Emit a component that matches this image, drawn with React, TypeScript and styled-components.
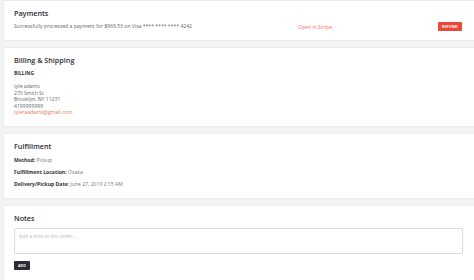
import React from 'react';
import styled, { createGlobalStyle } from 'styled-components';

const GlobalStyle = createGlobalStyle`
  html, body {
    margin: 0;
    padding: 0;
    background: #f3f3f3;
    font-family: "Open Sans", "Lato", sans-serif;
    color: #333;
  }
  * { box-sizing: border-box; }
`;

const Page = styled.div`
  display: flex;
  flex-direction: column;
  gap: 6px;
  padding-left: 3px;
  width: 474px;
  height: 280px;
  overflow: hidden;
`;

const Card = styled.section<{ $height: number }>`
  background: #fff;
  border: 1px solid #ececec;
  border-right: none;
  height: ${({ $height }) => $height}px;
  flex-shrink: 0;
  padding: 7px 12px 0 10px;
`;

const Title = styled.h2`
  margin: 0;
  font-size: 7.2px;
  font-weight: 600;
  color: #2e2e33;
  line-height: 10px;
`;

const PaymentRow = styled.div`
  display: grid;
  grid-template-columns: 284px 1fr auto;
  align-items: center;
  margin-top: 4px;
`;

const Small = styled.div`
  font-size: 5.1px;
  line-height: 6.5px;
  color: #666;
`;

const Link = styled.a`
  font-size: 5.1px;
  color: #e9765b;
  text-decoration: none;
`;

const RefundButton = styled.button`
  display: block;
  background: #e8483a;
  color: #fff;
  border: none;
  border-radius: 1px;
  font-family: inherit;
  font-size: 3.6px;
  font-weight: 700;
  letter-spacing: 0.2px;
  height: 9px;
  width: 24px;
  padding: 0;
`;

const SubHead = styled.div`
  margin-top: 5px;
  font-size: 5px;
  font-weight: 700;
  color: #333;
`;

const Address = styled.div`
  margin-top: 7px;
  display: flex;
  flex-direction: column;
`;

const Email = styled(Small)`
  color: #e9765b;
`;

const Field = styled.div`
  margin-top: 6px;
  font-size: 5.1px;
  line-height: 7px;
  color: #777;

  & + & {
    margin-top: 5px;
  }

  b {
    color: #333;
    font-weight: 700;
  }
`;

const NoteArea = styled.textarea`
  display: block;
  margin-top: 5px;
  width: 449px;
  height: 26px;
  border: 1px solid #dcdcdc;
  border-radius: 1px;
  resize: none;
  padding: 4px 4px;
  font-family: inherit;
  font-size: 4.8px;
  color: #333;

  &::placeholder {
    color: #bbb;
  }
`;

const AddButton = styled.button`
  display: block;
  margin-top: 7px;
  background: #2c2c36;
  color: #fff;
  border: none;
  border-radius: 1px;
  font-family: inherit;
  font-size: 3.6px;
  font-weight: 700;
  height: 9px;
  width: 16px;
  padding: 0;
`;

export default function App() {
  return (
    <>
      <GlobalStyle />
      <Page>
        <Card $height={41}>
          <Title>Payments</Title>
          <PaymentRow>
            <Small>Successfully processed a payment for $969.53 on Visa **** **** **** 4242</Small>
            <Link href="#">Open in Stripe</Link>
            <RefundButton>REFUND</RefundButton>
          </PaymentRow>
        </Card>
        <Card $height={80}>
          <Title>Billing &amp; Shipping</Title>
          <SubHead>BILLING</SubHead>
          <Address>
            <Small>tyle adams</Small>
            <Small>270 Smith St</Small>
            <Small>Brooklyn, NY 11231</Small>
            <Small>4199999999</Small>
            <Email>tyleraadams@gmail.com</Email>
          </Address>
        </Card>
        <Card $height={66}>
          <Title>Fulfillment</Title>
          <Field><b>Method:</b> Pickup</Field>
          <Field><b>Fulfillment Location:</b> Osaka</Field>
          <Field><b>Delivery/Pickup Date:</b> June 27, 2019 2:15 AM</Field>
        </Card>
        <Card $height={90}>
          <Title>Notes</Title>
          <NoteArea placeholder="Add a note to this order..." />
          <AddButton>ADD</AddButton>
        </Card>
      </Page>
    </>
  );
}
